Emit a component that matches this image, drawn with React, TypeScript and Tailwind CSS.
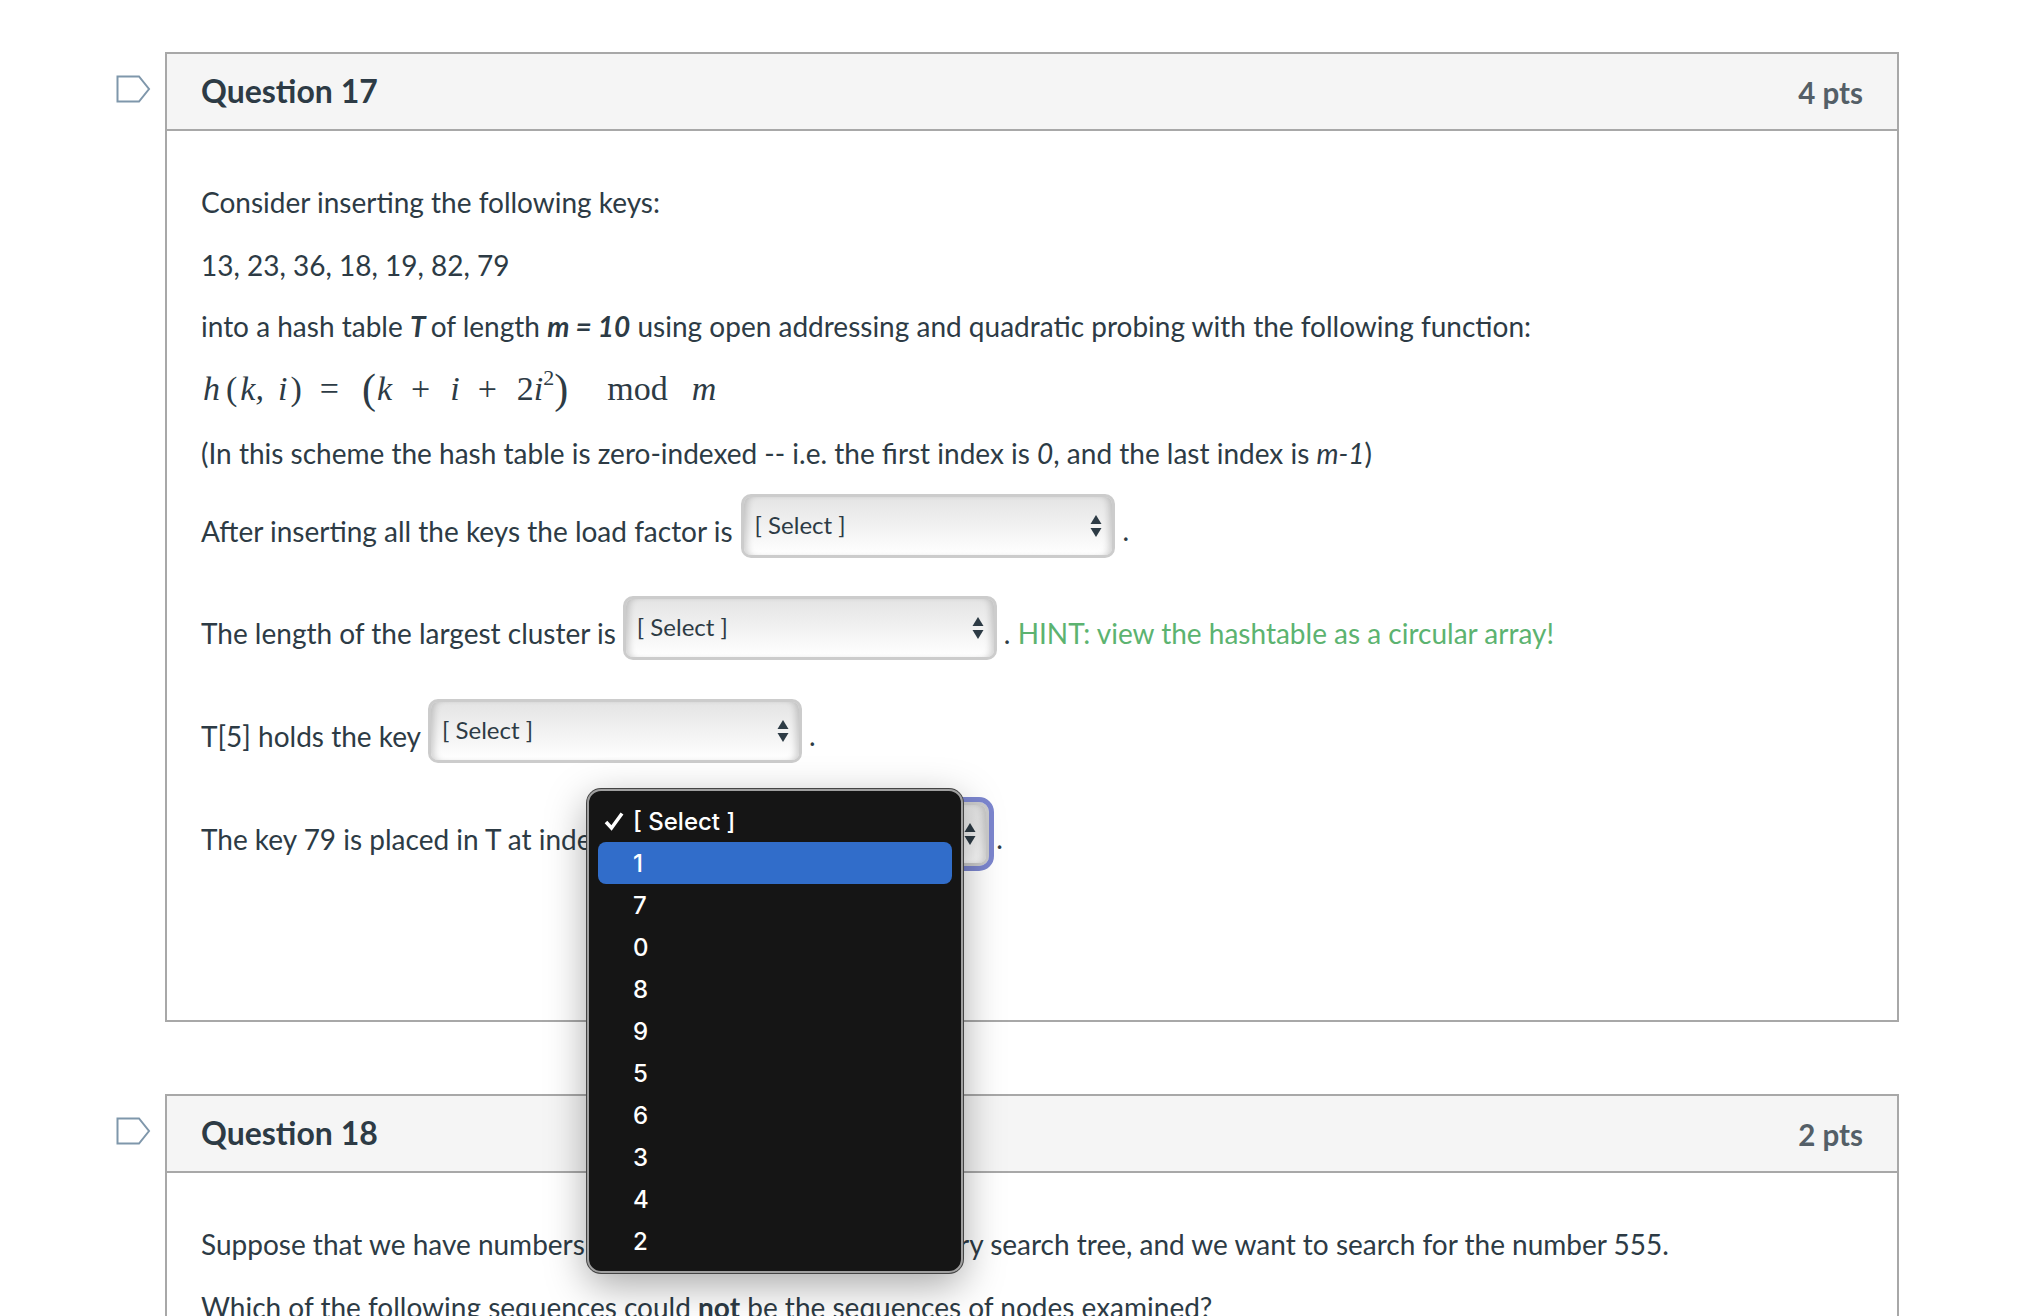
import React from 'react';

const options = ['1', '7', '0', '8', '9', '5', '6', '3', '4', '2'];

const Arrows: React.FC = () => (
  <svg width="12" height="24" viewBox="0 0 12 24" className="shrink-0 text-[#2d3b45]">
    <path d="M6 1 L11.5 10 L0.5 10 Z" fill="currentColor" />
    <path d="M0.5 14 L11.5 14 L6 23 Z" fill="currentColor" />
  </svg>
);

const FakeSelect: React.FC<{ focused?: boolean }> = ({ focused }) => (
  <span
    className={`relative inline-flex h-[64px] w-[374px] shrink-0 items-center justify-between rounded-[10px] border-[3px] border-[#cccccc] bg-gradient-to-b from-[#e4e4e4] to-[#ffffff] pl-[11px] pr-[10px] text-[24px] leading-none shadow-[inset_-7px_0_7px_-4px_rgba(0,0,0,0.18),inset_7px_0_7px_-4px_rgba(0,0,0,0.18)] ${
      focused ? 'ml-[3px] outline outline-[5px] outline-[#7c86cf]' : ''
    }`}
  >
    <span className="-mt-[2px]">[ Select ]</span>
    <Arrows />
  </span>
);

const Flag: React.FC = () => (
  <svg width="35" height="29" viewBox="0 0 35 29" className="absolute left-[-51px] top-[21px]">
    <path d="M1.5 1.5 H23 L33 14 L23 26.5 H1.5 Z" fill="#fff" stroke="#7f97ab" strokeWidth="2" />
  </svg>
);

const Header: React.FC<{ title: string; pts: string }> = ({ title, pts }) => (
  <div className="flex h-[77px] items-center justify-between border-b-[2px] border-[#a8a8a8] bg-[#f5f5f5] px-[34px]">
    <h2 className="-mt-[1px] text-[32px] font-bold leading-none">{title}</h2>
    <span className="mt-[3px] text-[29.5px] font-bold leading-none text-[#545f67]">{pts}</span>
  </div>
);

const App: React.FC = () => {
  return (
    <div
      className="relative h-[1316px] overflow-hidden bg-white pl-[165px] pr-[126px] pt-[52px] text-[#2d3b45]"
      style={{ fontFamily: 'Lato, sans-serif' }}
    >
      {/* Question 17 */}
      <section className="relative h-[970px] border-[2px] border-[#a8a8a8]">
        <Flag />
        <Header title="Question 17" pts="4 pts" />
        <div className="px-[34px] pt-[50px] text-[28px] leading-[42px]">
          <p className="mb-[20.7px]">Consider inserting the following keys:</p>
          <p className="mb-[19.3px]">13, 23, 36, 18, 19, 82, 79</p>
          <p className="mb-[20.7px]">
            into a hash table <b className="italic">T</b> <span className="-ml-[2px]">of length</span> <b className="italic">m = 10</b> using open addressing and quadratic probing with the following function:
          </p>
          <p
            className="mb-[22px] flex items-center pl-[2px] text-[34px]"
            style={{ fontFamily: '"Liberation Serif", serif' }}
          >
            <span className="italic">h</span>
            <span className="ml-[6px]">(</span>
            <span className="ml-[3px] italic">k,</span>
            <span className="ml-[14px] italic">i</span>
            <span className="ml-[3px]">)</span>
            <span className="ml-[18px]">=</span>
            <span className="ml-[23px] text-[42px] leading-none">(</span>
            <span className="ml-[1px] italic">k</span>
            <span className="ml-[19px]">+</span>
            <span className="ml-[20px] italic">i</span>
            <span className="ml-[18px]">+</span>
            <span className="ml-[20px]">2</span>
            <span className="italic">i</span>
            <sup className="text-[22px]">2</sup>
            <span className="text-[42px] leading-none">)</span>
            <span className="ml-[39px]">mod</span>
            <span className="ml-[24px] italic">m</span>
          </p>
          <p className="mb-[20px]">
            (In this scheme the hash table is zero-indexed -- i.e. the first index is <i>0</i>, and the last index is <i>m-1</i>)
          </p>
          <div className="mb-[38.5px] flex items-center gap-[8px]">
            <span className="mt-[10px]">After inserting all the keys the load factor is</span>
            <FakeSelect />
            <span className="mt-[9px]">.</span>
          </div>
          <div className="mb-[38.5px] flex items-center gap-[7px]">
            <span className="mt-[10px]">The length of the largest cluster is</span>
            <FakeSelect />
            <span className="mt-[10px]">
              . <span className="text-[#5cb370]">HINT: view the hashtable as a circular array!</span>
            </span>
          </div>
          <div className="mb-[39px] flex items-center gap-[7px]">
            <span className="mt-[10px]">T[5] holds the key</span>
            <FakeSelect />
            <span className="mt-[9px]">.</span>
          </div>
          <div className="flex items-center gap-[7px]">
            <span className="mt-[10px]">The key 79 is placed in T at index</span>
            <FakeSelect focused />
            <span className="mt-[9px]">.</span>
          </div>
        </div>
      </section>

      {/* Question 18 */}
      <section className="relative mt-[72px] h-[400px] border-[2px] border-[#a8a8a8]">
        <Flag />
        <Header title="Question 18" pts="2 pts" />
        <div className="px-[34px] pt-[50px] text-[28px] leading-[42px]">
          <p className="mb-[20.7px]">
            Suppose that we have numbers between 1 and 1000 in a <span className="ml-[2px]">binary search tree, and we want to search for the number 555.</span>
          </p>
          <p>
            Which of the following sequences could <b>not</b> be the sequences of nodes examined?
          </p>
        </div>
      </section>

      {/* Open select menu */}
      <div
        className="absolute left-[587px] top-[789px] w-[376px] rounded-[14px] border-[2px] border-[#a0a0a0] bg-[#151515] px-[9px] py-[9px] text-[24px] font-medium leading-[41px] text-white shadow-[0_0_0_1px_#444444,0_12px_40px_rgba(0,0,0,0.35)]"
        style={{ fontFamily: 'Inter, sans-serif' }}
      >
        <div className="flex h-[42px] items-center">
          <span className="flex w-[35px] justify-center pr-[3px]">
            <svg width="20" height="20" viewBox="0 0 20 20" fill="none" stroke="white" strokeWidth="3.5">
              <path d="M2 11 L7.5 17 L18 2.5" />
            </svg>
          </span>
          <span>[ Select ]</span>
        </div>
        {options.map((opt, i) => (
          <div key={opt} className={`h-[42px] pl-[35px] pt-[1px] ${i === 0 ? 'rounded-[8px] bg-[#316dca]' : ''}`}>
            {opt}
          </div>
        ))}
      </div>
    </div>
  );
};

export default App;
